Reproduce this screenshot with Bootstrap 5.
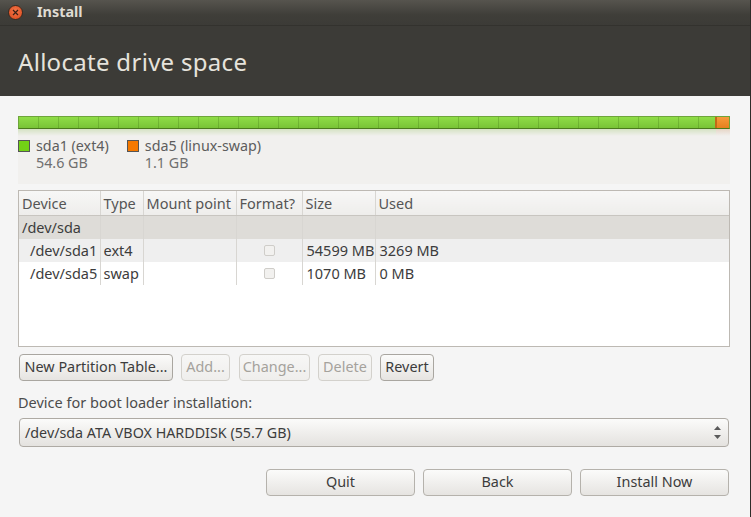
<!DOCTYPE html>
<html lang="en">
<head>
<meta charset="utf-8">
<title>Install</title>
<link href="https://cdn.jsdelivr.net/npm/bootstrap@5.3.0/dist/css/bootstrap.min.css" rel="stylesheet">
<style>
html,body{height:517px;overflow:hidden;background:#2e2c29}
body{font-family:"Noto Sans","Open Sans",sans-serif;font-size:14.5px;color:#3c3c3c}
.win{width:750px;height:517px;background:#f5f5f5}
.titlebar{height:26px;background:linear-gradient(#56544e,#3f3e39 60%,#3c3b37);border-bottom:1px solid #33322e;padding-left:8px;gap:14px}
.closer{width:15px;height:15px;border-radius:50%;background:radial-gradient(circle at 50% 40%,#f4764a,#d9481a);border:1px solid #3a2a20}
.wintitle{font-size:14.4px;font-weight:700;color:#dfdbd2;line-height:1}
.banner{height:70px;background:#3c3b37;color:#e6e3dc;padding-left:18px;padding-top:2px}
.banner h1{font-size:24px;font-weight:400;margin:0;letter-spacing:.3px}
.main{padding:20px 20px 0 18px}
.segbar{height:13px;border:1px solid #6ea53a;border-bottom-color:#4a7a1c;background:repeating-linear-gradient(90deg,transparent 0 19px,rgba(60,110,20,.28) 19px 20px),linear-gradient(#8fdd47,#79c336);overflow:hidden}
.seg-b{width:14px;background:linear-gradient(#f79a3a,#e5801f);border-left:2px solid #c26a17;height:100%;margin-left:auto}
.legendbox{height:55px;background:linear-gradient(#e6d5c6,#f1f0ee) no-repeat right top/14px 7px,linear-gradient(#d5e2c3,#f1f0ee) no-repeat left top/100% 7px,#f1f0ee;color:#5d5d5d;font-size:14.3px;line-height:17px;padding-top:8px;gap:18px}
.swatch{width:12px;height:12px;margin:3px 6px 0 0;border:1px solid #555}
.sw-g{background:#73d216}
.sw-o{background:#f57900}
.sub-size{color:#6f6f6f}
.parts{margin-top:6px;height:157px;background:#fff;border:1px solid #bdb9b3}
.parts .table{margin:0;font-size:14.5px;--bs-table-bg:transparent;table-layout:fixed;width:100%;color:#3c3c3c}
.parts th,.parts td{padding:0 3px;height:23px;border:0;border-right:1px solid #d8d6d2;font-weight:400;white-space:nowrap;line-height:1;vertical-align:middle;overflow:visible}
.parts th:last-child,.parts td:last-child{border-right:0}
.parts thead th{height:24px;background:linear-gradient(#f7f7f6,#eeedeb);border-bottom:1px solid #c8c5c0;color:#555}
.row-disk td{height:24px;background:#dedcd8}
.row-one td{background:#efefef}
.ind{padding-left:11px!important}
.sized{padding-left:4px!important}
.tick{display:block;width:11px;height:11px;margin:auto;border:1px solid #cfcdc9;border-radius:2px;background:#f2f1ef}
.act{gap:8px;margin-top:7px;padding-left:1px}
.gbtn{height:27px;padding:0;font-size:14.4px;line-height:1;border:1px solid #a9a6a0;border-radius:4px;color:#3c3c3c;background:linear-gradient(#fbfbfa,#e6e4e1);white-space:nowrap}
.gbtn:disabled{opacity:1;color:#a5a29c;border-color:#d3d1cc;background:linear-gradient(#f7f7f6,#efeeec)}
.w-new{width:154px}
.w-add{width:49px}
.w-chg{width:71px;margin-left:1px}
.w-del{width:54px}
.w-rev{width:54px}
.bootlabel{margin:13px 0 7px;line-height:17px;color:#4c4c4c}
.devpick{height:29px;margin:0 1px;padding:0 7px 0 5px;font-size:14.3px;border:1px solid #aeaaa4;border-radius:4px;color:#3c3c3c;background:linear-gradient(#fbfbfa,#e4e2df)}
.nav-btns{gap:8px;margin:22px 1px 0 0}
.nav-btns .gbtn{width:149px;border-color:#b5b2ac}
.c-dev{width:81px}
.c-typ{width:43px}
.c-mnt{width:93px}
.c-fmt{width:66px}
.c-siz{width:73px}
</style>
</head>
<body>
<div class="win d-flex flex-column">
  <div class="titlebar d-flex align-items-center">
    <span class="closer d-flex align-items-center justify-content-center">
      <svg width="7" height="7" viewBox="0 0 7 7"><path d="M1 1l5 5M6 1L1 6" stroke="#3a2015" stroke-width="1.2"/></svg>
    </span>
    <span class="wintitle">Install</span>
  </div>
  <div class="banner d-flex align-items-center"><h1>Allocate drive space</h1></div>
  <div class="main">
    <div class="segbar d-flex"><div class="seg-b"></div></div>
    <div class="legendbox d-flex">
      <div class="d-flex"><span class="swatch sw-g"></span><div><div>sda1 (ext4)</div><div class="sub-size">54.6 GB</div></div></div>
      <div class="d-flex"><span class="swatch sw-o"></span><div><div>sda5 (linux-swap)</div><div class="sub-size">1.1 GB</div></div></div>
    </div>
    <div class="parts">
      <table class="table">
        <colgroup><col class="c-dev"><col class="c-typ"><col class="c-mnt"><col class="c-fmt"><col class="c-siz"><col></colgroup>
        <thead><tr><th>Device</th><th>Type</th><th>Mount point</th><th>Format?</th><th>Size</th><th>Used</th></tr></thead>
        <tbody>
          <tr class="row-disk"><td>/dev/sda</td><td></td><td></td><td></td><td></td><td></td></tr>
          <tr class="row-one"><td class="ind">/dev/sda1</td><td>ext4</td><td></td><td><span class="tick"></span></td><td class="sized">54599 MB</td><td class="sized">3269 MB</td></tr>
          <tr><td class="ind">/dev/sda5</td><td>swap</td><td></td><td><span class="tick"></span></td><td class="sized">1070 MB</td><td class="sized">0 MB</td></tr>
        </tbody>
      </table>
    </div>
    <div class="act d-flex">
      <button class="btn gbtn w-new" type="button">New Partition Table...</button>
      <button class="btn gbtn w-add" type="button" disabled>Add...</button>
      <button class="btn gbtn w-chg" type="button" disabled>Change...</button>
      <button class="btn gbtn w-del" type="button" disabled>Delete</button>
      <button class="btn gbtn w-rev" type="button">Revert</button>
    </div>
    <div class="bootlabel">Device for boot loader installation:</div>
    <div class="devpick d-flex align-items-center justify-content-between">
      <span>/dev/sda ATA VBOX HARDDISK (55.7 GB)</span>
      <svg width="7" height="13" viewBox="0 0 7 13"><path d="M3.5 0L7 4H0zM0 9h7l-3.5 4z" fill="#5a5a5a"/></svg>
    </div>
    <div class="nav-btns d-flex justify-content-end">
      <button class="btn gbtn" type="button">Quit</button>
      <button class="btn gbtn" type="button">Back</button>
      <button class="btn gbtn" type="button">Install Now</button>
    </div>
  </div>
</div>
</body>
</html>
